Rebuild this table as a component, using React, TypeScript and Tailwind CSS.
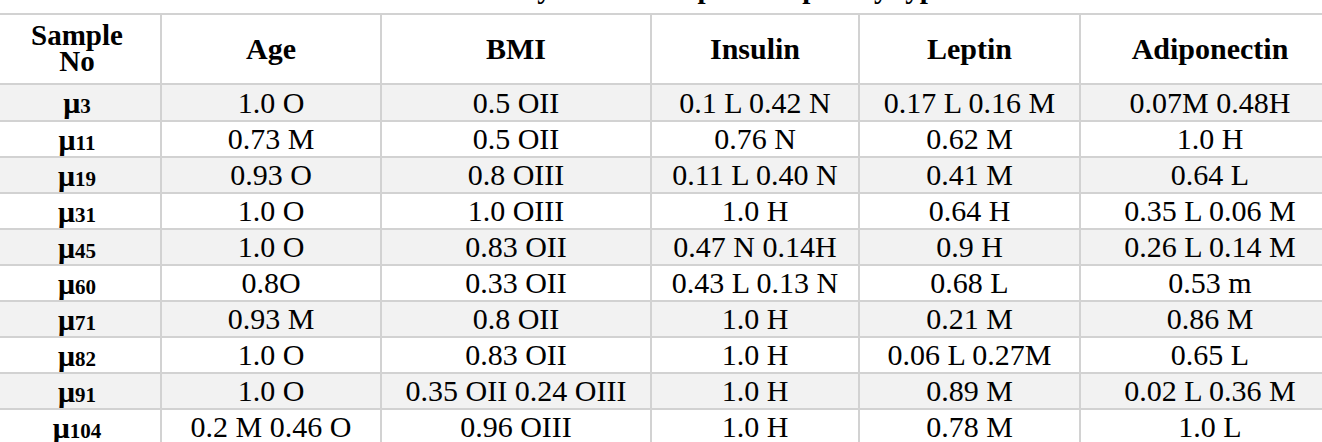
const rows: [string, string, string, string, string, string][] = [
  ['3', '1.0 O', '0.5 OII', '0.1 L 0.42 N', '0.17 L 0.16 M', '0.07M 0.48H'],
  ['11', '0.73 M', '0.5 OII', '0.76 N', '0.62 M', '1.0 H'],
  ['19', '0.93 O', '0.8 OIII', '0.11 L 0.40 N', '0.41 M', '0.64 L'],
  ['31', '1.0 O', '1.0 OIII', '1.0 H', '0.64 H', '0.35 L 0.06 M'],
  ['45', '1.0 O', '0.83 OII', '0.47 N 0.14H', '0.9 H', '0.26 L 0.14 M'],
  ['60', '0.8O', '0.33 OII', '0.43 L 0.13 N', '0.68 L', '0.53 m'],
  ['71', '0.93 M', '0.8 OII', '1.0 H', '0.21 M', '0.86 M'],
  ['82', '1.0 O', '0.83 OII', '1.0 H', '0.06 L 0.27M', '0.65 L'],
  ['91', '1.0 O', '0.35 OII 0.24 OIII', '1.0 H', '0.89 M', '0.02 L 0.36 M'],
  ['104', '0.2 M 0.46 O', '0.96 OIII', '1.0 H', '0.78 M', '1.0 L'],
]

const headers = ['Age', 'BMI', 'Insulin', 'Leptin', 'Adiponectin']

const App = () => {
  return (
    <div className="w-[1322px] h-[442px] overflow-hidden bg-white text-black font-['Liberation_Serif',serif]">
      {/* caption, mostly out of view above the table */}
      <div className="h-[13px] overflow-hidden">
        <div className="-mt-[29px] text-center text-[29px] font-bold leading-[34px]">
          Table 4. Fuzzy membership of samples by type
        </div>
      </div>

      <table className="-ml-[8px] w-[1347px] table-fixed border-collapse">
        <colgroup>
          <col className="w-[168px]" />
          <col className="w-[220px]" />
          <col className="w-[270px]" />
          <col className="w-[208px]" />
          <col className="w-[221px]" />
          <col className="w-[260px]" />
        </colgroup>
        <thead>
          <tr>
            <th className="h-[70px] p-0 pb-[2px] border-2 border-[#d2d2d2] text-[29px] leading-[26px] font-bold">
              Sample
              <br />
              No
            </th>
            {headers.map((h) => (
              <th key={h} className="h-[70px] p-0 border-2 border-[#d2d2d2] text-[30px] leading-[30px] font-bold">
                {h}
              </th>
            ))}
          </tr>
        </thead>
        <tbody>
          {rows.map((r, i) => (
            <tr
              key={r[0]}
              className={`${i === 0 ? 'h-[37px]' : 'h-[36px]'} ${i % 2 === 0 ? 'bg-[#f2f2f2]' : 'bg-white'}`}
            >
              <td className="p-0 pt-[1px] border-2 border-[#d2d2d2] text-center font-bold text-[30px] leading-[30px]">
                μ<span className="text-[21px] leading-none">{r[0]}</span>
              </td>
              {r.slice(1).map((v, j) => (
                <td key={j} className="p-0 border-2 border-[#d2d2d2] text-center text-[30px] leading-[30px]">
                  {v}
                </td>
              ))}
            </tr>
          ))}
        </tbody>
      </table>
    </div>
  )
}

export default App
